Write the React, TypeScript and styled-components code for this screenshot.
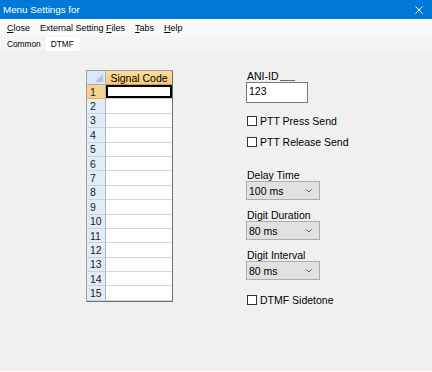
import { FC, Fragment } from "react";
import styled, { createGlobalStyle } from "styled-components";

const GlobalStyle = createGlobalStyle`
  html, body {
    margin: 0;
    padding: 0;
    background: #fbfbfb;
  }
  body {
    font-family: "Liberation Sans", Arial, sans-serif;
  }
`;

const Window = styled.div`
  width: 432px;
  height: 372px;
  display: flex;
  flex-direction: column;
  background: #f9f9f9;
  overflow: hidden;
`;

const TitleBar = styled.div`
  height: 19px;
  flex: none;
  display: flex;
  align-items: center;
  justify-content: space-between;
  padding: 0 9px 0 3px;
  background: #0078d7;
  color: #fff;
  font-size: 9.8px;
`;

const MenuBar = styled.div`
  height: 17px;
  flex: none;
  display: flex;
  align-items: center;
  gap: 10px;
  padding-left: 7px;
  font-size: 9px;
  color: #000;
`;

const TabStrip = styled.div`
  height: 15px;
  flex: none;
  display: flex;
  align-items: flex-end;
  padding-left: 2px;
  background: #f4f4f4;
`;

const Tab = styled.div<{ $active?: boolean }>`
  height: 14px;
  line-height: 14px;
  padding: 0 5px;
  font-size: 8.3px;
  color: #000;
  background: ${(p) => (p.$active ? "#ffffff" : "transparent")};
`;

const Frame = styled.div`
  flex: 1;
  display: flex;
  padding: 0 3px 2px 4px;
  background: #f5ede7;
  border-bottom: 1px solid #fcfcfc;
`;

const Panel = styled.div`
  flex: 1;
  display: flex;
  align-items: flex-start;
  gap: 73px;
  padding: 19px 0 0 82px;
  background: #f0f0f0;
`;

const Grid = styled.div`
  display: grid;
  grid-template-columns: 19px 66px;
  grid-template-rows: 14px repeat(15, 14.4px);
  border: 1px solid;
  border-color: #a0a0a0 #707070 #707070 #a0a0a0;
  background: #fff;
  font-size: 10.5px;
`;

const Corner = styled.div`
  position: relative;
  background: #dce6f4;
  border-right: 1px solid #9eb6ce;
  border-bottom: 1px solid #9eb6ce;

  &:after {
    content: "";
    position: absolute;
    right: 2px;
    bottom: 2px;
    width: 8px;
    height: 8px;
    background: #b3c5dc;
    clip-path: polygon(100% 0, 100% 100%, 0 100%);
  }
`;

const HeadCell = styled.div`
  display: flex;
  align-items: center;
  justify-content: center;
  background: linear-gradient(#fbdc9f, #f7c977);
  border-bottom: 1px solid #c9a35c;
  color: #000;
`;

const RowHead = styled.div<{ $active?: boolean }>`
  display: flex;
  align-items: center;
  padding-left: 3px;
  background: ${(p) => (p.$active ? "#f8d18c" : "#e3ebf6")};
  border-right: 1px solid #9eb6ce;
  border-bottom: 1px solid ${(p) => (p.$active ? "#e2b76a" : "#c5d3e4")};
  color: #222;
`;

const Cell = styled.div<{ $active?: boolean }>`
  background: #fff;
  border-bottom: 1px solid #d4d4d4;
  box-shadow: ${(p) => (p.$active ? "inset 0 0 0 2px #000" : "none")};
`;

const Side = styled.div`
  display: flex;
  flex-direction: column;
  width: 80px;
  font-size: 10.5px;
  color: #000;
`;

const Label = styled.div<{ $top?: number }>`
  height: 12px;
  line-height: 12px;
  padding-left: 1px;
  margin-top: ${(p) => p.$top ?? 0}px;
  white-space: nowrap;
  display: flex;
  align-items: flex-end;
`;

const LabelTail = styled.span`
  display: inline-block;
  width: 15px;
  height: 1px;
  margin: 0 0 1px 1px;
  background: #6a6a6a;
`;

const TextBox = styled.div`
  width: 62px;
  height: 21px;
  box-sizing: border-box;
  border: 1px solid #7a7a7a;
  background: #fff;
  padding: 2px 0 0 2px;
  line-height: 12px;
`;

const CheckRow = styled.label<{ $top: number }>`
  display: flex;
  align-items: center;
  gap: 3px;
  height: 12px;
  margin-top: ${(p) => p.$top}px;
  padding-left: 1px;
  white-space: nowrap;
`;

const Box = styled.span`
  width: 10px;
  height: 10px;
  box-sizing: border-box;
  border: 1px solid #333;
  background: #fff;
  flex: none;
`;

const Select = styled.div`
  width: 74px;
  height: 19px;
  box-sizing: border-box;
  display: flex;
  align-items: center;
  justify-content: space-between;
  padding: 0 7px 0 2px;
  border: 1px solid #adadad;
  background: #e1e1e1;
`;

const Chevron: FC = () => (
  <svg width="6" height="4" viewBox="0 0 6 4">
    <polyline points="0.5,0.5 3,3 5.5,0.5" fill="none" stroke="#5a5a5a" strokeWidth="1" />
  </svg>
);

const CloseIcon: FC = () => (
  <svg width="8" height="8" viewBox="0 0 8 8">
    <path d="M0.5 0.5 L7.5 7.5 M7.5 0.5 L0.5 7.5" stroke="#fff" strokeWidth="1" />
  </svg>
);

const rows = Array.from({ length: 15 }, (_, i) => i + 1);

export default function App() {
  return (
    <>
      <GlobalStyle />
      <Window>
        <TitleBar>
          <span>Menu Settings for</span>
          <CloseIcon />
        </TitleBar>
        <MenuBar>
          <span><u>C</u>lose</span>
          <span>External Setting <u>F</u>iles</span>
          <span><u>T</u>abs</span>
          <span><u>H</u>elp</span>
        </MenuBar>
        <TabStrip>
          <Tab>Common</Tab>
          <Tab $active>DTMF</Tab>
        </TabStrip>
        <Frame>
          <Panel>
            <Grid>
              <Corner />
              <HeadCell>Signal Code</HeadCell>
              {rows.map((n) => (
                <Fragment key={n}>
                  <RowHead $active={n === 1}>{n}</RowHead>
                  <Cell $active={n === 1} />
                </Fragment>
              ))}
            </Grid>
            <Side>
              <Label>
                ANI-ID
                <LabelTail />
              </Label>
              <TextBox>123</TextBox>
              <CheckRow $top={12}>
                <Box />
                PTT Press Send
              </CheckRow>
              <CheckRow $top={9}>
                <Box />
                PTT Release Send
              </CheckRow>
              <Label $top={21}>Delay Time</Label>
              <Select>
                100 ms
                <Chevron />
              </Select>
              <Label $top={9}>Digit Duration</Label>
              <Select>
                80 ms
                <Chevron />
              </Select>
              <Label $top={9}>Digit Interval</Label>
              <Select>
                80 ms
                <Chevron />
              </Select>
              <CheckRow $top={14}>
                <Box />
                DTMF Sidetone
              </CheckRow>
            </Side>
          </Panel>
        </Frame>
      </Window>
    </>
  );
}
